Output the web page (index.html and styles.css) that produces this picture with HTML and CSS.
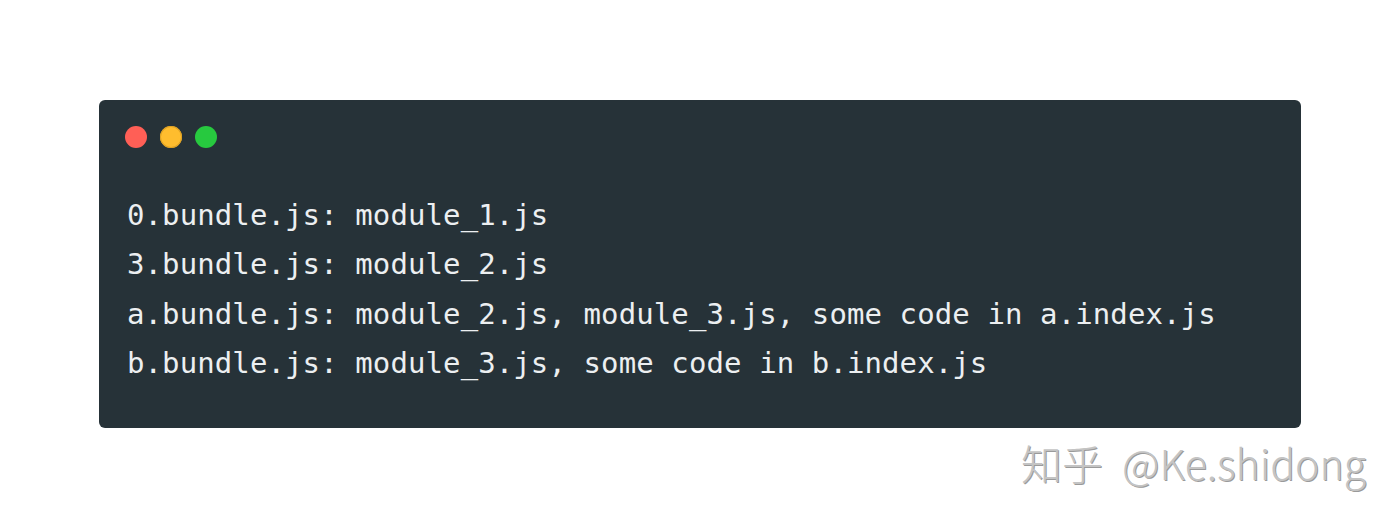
FILE: index.html
```html
<!DOCTYPE html>
<html>
<head>
<meta charset="utf-8">
<link rel="stylesheet" href="styles.css">
</head>
<body>
<div class="page">
  <div class="window">
    <div class="dots">
      <span class="dot red"></span>
      <span class="dot yellow"></span>
      <span class="dot green"></span>
    </div>
    <div class="code">
      <div class="line">0.bundle.js: module_1.js</div>
      <div class="line">3.bundle.js: module_2.js</div>
      <div class="line">a.bundle.js: module_2.js, module_3.js, some code in a.index.js</div>
      <div class="line">b.bundle.js: module_3.js, some code in b.index.js</div>
    </div>
  </div>
  <div class="mark">知乎 @Ke.shidong</div>
</div>
</body>
</html>
```
FILE: styles.css
```css
html, body {
  margin: 0;
  background: #ffffff;
}
.page {
  width: 1400px;
  height: 528px;
  padding-top: 100px;
  box-sizing: border-box;
  display: flex;
  flex-direction: column;
}
.window {
  margin-left: 99px;
  width: 1202px;
  height: 328px;
  box-sizing: border-box;
  background: #263238;
  border-radius: 6px;
  padding: 26px 0 0 26px;
}
.dots {
  display: flex;
  gap: 13px;
  height: 22px;
}
.dot {
  width: 22px;
  height: 22px;
  border-radius: 50%;
  display: block;
}
.red { background: #ff5f56; }
.yellow { background: #ffbd2e; box-shadow: inset 0 0 0 1px #dea123; }
.green { background: #27c93f; }
.code {
  margin: 43px 0 0 2px;
  font-family: "DejaVu Sans Mono", monospace;
  font-size: 29px;
  letter-spacing: 0.1px;
  color: #eceff1;
}
.line {
  white-space: pre;
  line-height: 49.3px;
}
.mark {
  align-self: flex-end;
  margin-right: 34px;
  margin-top: 6px;
  font-family: "Noto Sans CJK SC", "Noto Sans", sans-serif;
  font-weight: 300;
  font-size: 41px;
  word-spacing: 10px;
  line-height: 56px;
  color: #c4c4c4;
  text-shadow: 1px 1px 0 #9a9a9a, -1px -1px 0 #ffffff;
}
```
